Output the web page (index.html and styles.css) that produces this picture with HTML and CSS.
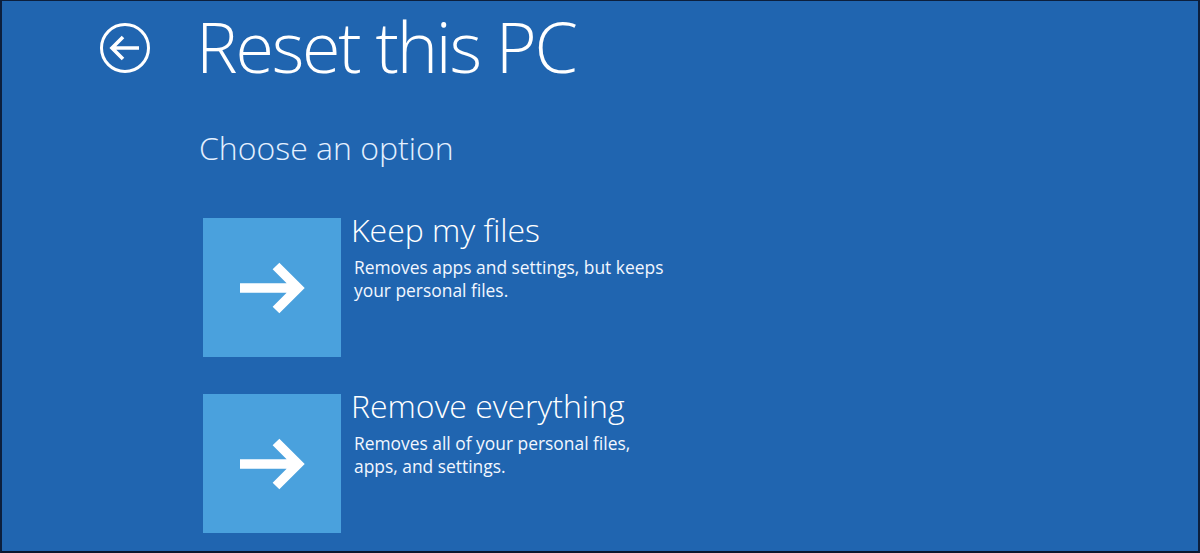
FILE: index.html
```html
<!DOCTYPE html>
<html lang="en">
<head>
<meta charset="utf-8">
<title>Reset this PC</title>
<link rel="stylesheet" href="styles.css">
</head>
<body>
<div class="frame">
  <header class="header">
    <button class="back" aria-label="Back">
      <svg width="52" height="52" viewBox="0 0 52 52">
        <circle cx="26" cy="26" r="23.5" fill="none" stroke="#fff" stroke-width="3"/>
        <path d="M13 26 H40 M24 15 L13 26 L24 37" fill="none" stroke="#fff" stroke-width="3.6" stroke-linejoin="miter" stroke-linecap="butt"/>
      </svg>
    </button>
    <h1 class="title">Reset this PC</h1>
  </header>
  <main class="content">
    <h2 class="subtitle">Choose an option</h2>
    <div class="options">
      <div class="option">
        <div class="tile">
          <svg width="66" height="52" viewBox="0 0 66 52">
            <path d="M0 26 H58 M36 4 L58 26 L36 48" fill="none" stroke="#fff" stroke-width="9.5" stroke-linejoin="miter"/>
          </svg>
        </div>
        <div class="text">
          <div class="opt-title">Keep my files</div>
          <p class="opt-desc">Removes apps and settings, but keeps<br>your personal files.</p>
        </div>
      </div>
      <div class="option">
        <div class="tile">
          <svg width="66" height="52" viewBox="0 0 66 52">
            <path d="M0 26 H58 M36 4 L58 26 L36 48" fill="none" stroke="#fff" stroke-width="9.5" stroke-linejoin="miter"/>
          </svg>
        </div>
        <div class="text">
          <div class="opt-title">Remove everything</div>
          <p class="opt-desc">Removes all of your personal files,<br>apps, and settings.</p>
        </div>
      </div>
    </div>
  </main>
</div>
</body>
</html>
```
FILE: styles.css
```css
html, body {
  margin: 0;
  padding: 0;
  background: #0b1a33;
}
.frame {
  box-sizing: border-box;
  width: 1200px;
  height: 553px;
  background: #2065b0;
  border-top: 1px solid #0c1f3d;
  border-left: 2px solid #0c1f3d;
  border-right: 2px solid #0c1f3d;
  border-bottom: 2px solid #0a1730;
  color: #fff;
  font-family: "Open Sans", "Noto Sans", sans-serif;
  overflow: hidden;
}
.header {
  display: flex;
  align-items: flex-start;
  padding: 0 0 0 97px;
  gap: 45px;
}
.back {
  background: none;
  border: 0;
  padding: 0;
  margin-top: 21px;
  width: 52px;
  height: 52px;
  display: flex;
}
.title {
  margin: 0;
  font-weight: 300;
  font-size: 70px;
  line-height: 90px;
  letter-spacing: -2.2px;
}
.content {
  padding-left: 197px;
}
.subtitle {
  margin: 37px 0 0 0;
  font-weight: 300;
  font-size: 32px;
  line-height: 40px;
  color: #e4f0ff;
}
.options {
  display: flex;
  flex-direction: column;
  gap: 37px;
  margin-top: 50px;
  padding-left: 4px;
}
.option {
  display: flex;
  gap: 10px;
}
.tile {
  width: 138px;
  height: 139px;
  background: #4aa1dd;
  display: flex;
  align-items: center;
  justify-content: center;
  flex: none;
}
.tile svg {
  margin-left: 2px;
}
.opt-title {
  font-weight: 300;
  font-size: 32px;
  line-height: 32px;
  margin-top: -4px;
}
.opt-desc {
  margin: 10px 0 0 3px;
  font-size: 17.4px;
  line-height: 23px;
  color: #f2f7ff;
}
```
